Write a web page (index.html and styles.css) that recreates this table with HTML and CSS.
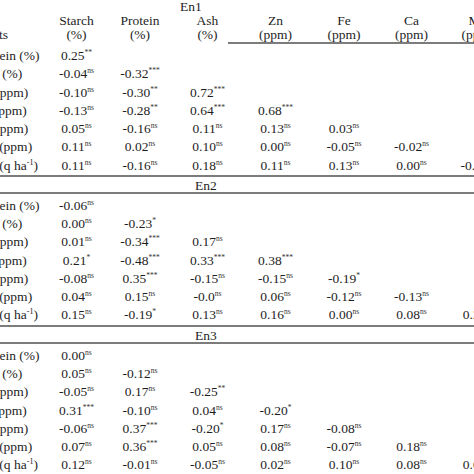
FILE: index.html
```html
<!DOCTYPE html>
<html>
<head>
<meta charset="utf-8">
<link rel="stylesheet" href="styles.css">
</head>
<body>
<div class="table">
  <div class="en en1">En1</div>
  <div class="row hrow">
    <div></div><div>Starch</div><div>Protein</div><div>Ash</div><div>Zn</div><div>Fe</div><div>Ca</div><div>Mg</div>
  </div>
  <div class="row hrow">
    <div class="lab">Traits</div><div>(%)</div><div>(%)</div><div>(%)</div><div>(ppm)</div><div>(ppm)</div><div>(ppm)</div><div>(ppm)</div>
  </div>
  <div class="rule partial"></div>

  <div class="body">
    <div class="row"><div class="lab">Protein (%)</div><div>0.25<sup>**</sup></div></div>
    <div class="row"><div class="lab">Ash (%)</div><div>-0.04<sup>ns</sup></div><div>-0.32<sup>***</sup></div></div>
    <div class="row"><div class="lab">Zn (ppm)</div><div>-0.10<sup>ns</sup></div><div>-0.30<sup>**</sup></div><div>0.72<sup>***</sup></div></div>
    <div class="row"><div class="lab">Fe (ppm)</div><div>-0.13<sup>ns</sup></div><div>-0.28<sup>**</sup></div><div>0.64<sup>***</sup></div><div>0.68<sup>***</sup></div></div>
    <div class="row"><div class="lab">Ca (ppm)</div><div>0.05<sup>ns</sup></div><div>-0.16<sup>ns</sup></div><div>0.11<sup>ns</sup></div><div>0.13<sup>ns</sup></div><div>0.03<sup>ns</sup></div></div>
    <div class="row"><div class="lab">Mg (ppm)</div><div>0.11<sup>ns</sup></div><div>0.02<sup>ns</sup></div><div>0.10<sup>ns</sup></div><div>0.00<sup>ns</sup></div><div>-0.05<sup>ns</sup></div><div>-0.02<sup>ns</sup></div></div>
    <div class="row"><div class="lab">GY (q ha<sup class="u">-1</sup>)</div><div>0.11<sup>ns</sup></div><div>-0.16<sup>ns</sup></div><div>0.18<sup>ns</sup></div><div>0.11<sup>ns</sup></div><div>0.13<sup>ns</sup></div><div>0.00<sup>ns</sup></div><div>-0.05<sup>ns</sup></div></div>
  </div>
  <div class="rule"></div>

  <div class="en">En2</div>
  <div class="rule"></div>
  <div class="body">
    <div class="row"><div class="lab">Protein (%)</div><div>-0.06<sup>ns</sup></div></div>
    <div class="row"><div class="lab">Ash (%)</div><div>0.00<sup>ns</sup></div><div>-0.23<sup>*</sup></div></div>
    <div class="row"><div class="lab">Zn (ppm)</div><div>0.01<sup>ns</sup></div><div>-0.34<sup>***</sup></div><div>0.17<sup>ns</sup></div></div>
    <div class="row"><div class="lab">Fe (ppm)</div><div>0.21<sup>*</sup></div><div>-0.48<sup>***</sup></div><div>0.33<sup>***</sup></div><div>0.38<sup>***</sup></div></div>
    <div class="row"><div class="lab">Ca (ppm)</div><div>-0.08<sup>ns</sup></div><div>0.35<sup>***</sup></div><div>-0.15<sup>ns</sup></div><div>-0.15<sup>ns</sup></div><div>-0.19<sup>*</sup></div></div>
    <div class="row"><div class="lab">Mg (ppm)</div><div>0.04<sup>ns</sup></div><div>0.15<sup>ns</sup></div><div>-0.0<sup>ns</sup></div><div>0.06<sup>ns</sup></div><div>-0.12<sup>ns</sup></div><div>-0.13<sup>ns</sup></div></div>
    <div class="row"><div class="lab">GY (q ha<sup class="u">-1</sup>)</div><div>0.15<sup>ns</sup></div><div>-0.19<sup>*</sup></div><div>0.13<sup>ns</sup></div><div>0.16<sup>ns</sup></div><div>0.00<sup>ns</sup></div><div>0.08<sup>ns</sup></div><div>0.20<sup>ns</sup></div></div>
  </div>
  <div class="rule"></div>

  <div class="en">En3</div>
  <div class="rule"></div>
  <div class="body">
    <div class="row"><div class="lab">Protein (%)</div><div>0.00<sup>ns</sup></div></div>
    <div class="row"><div class="lab">Ash (%)</div><div>0.05<sup>ns</sup></div><div>-0.12<sup>ns</sup></div></div>
    <div class="row"><div class="lab">Zn (ppm)</div><div>-0.05<sup>ns</sup></div><div>0.17<sup>ns</sup></div><div>-0.25<sup>**</sup></div></div>
    <div class="row"><div class="lab">Fe (ppm)</div><div>0.31<sup>***</sup></div><div>-0.10<sup>ns</sup></div><div>0.04<sup>ns</sup></div><div>-0.20<sup>*</sup></div></div>
    <div class="row"><div class="lab">Ca (ppm)</div><div>-0.06<sup>ns</sup></div><div>0.37<sup>***</sup></div><div>-0.20<sup>*</sup></div><div>0.17<sup>ns</sup></div><div>-0.08<sup>ns</sup></div></div>
    <div class="row"><div class="lab">Mg (ppm)</div><div>0.07<sup>ns</sup></div><div>0.36<sup>***</sup></div><div>0.05<sup>ns</sup></div><div>0.08<sup>ns</sup></div><div>-0.07<sup>ns</sup></div><div>0.18<sup>ns</sup></div></div>
    <div class="row"><div class="lab">GY (q ha<sup class="u">-1</sup>)</div><div>0.12<sup>ns</sup></div><div>-0.01<sup>ns</sup></div><div>-0.05<sup>ns</sup></div><div>0.02<sup>ns</sup></div><div>0.10<sup>ns</sup></div><div>0.08<sup>ns</sup></div><div>0.04<sup>ns</sup></div></div>
  </div>
</div>
</body>
</html>
```
FILE: styles.css
```css
html, body {
  margin: 0;
  padding: 0;
  background: #ffffff;
}
body {
  width: 474px;
  height: 474px;
  overflow: hidden;
}
.table {
  margin-left: -23px;
  width: 535px;
  font-family: "Liberation Serif", "Times New Roman", serif;
  font-size: 13.5px;
  color: #1e1e1e;
}
.row {
  display: grid;
  grid-template-columns: 69px 61px 66px 69px 67px 70px 65px 68px;
  height: 18.28px;
  line-height: 18.28px;
  white-space: nowrap;
}
.row > div {
  text-align: center;
}
.row > .lab {
  text-align: left;
}
.hrow {
  height: 14px;
  line-height: 14px;
}
.en {
  height: 14px;
  line-height: 14px;
  padding-left: 203px;
}
.body + .rule + .en,
.rule + .en {
  height: 12px;
  line-height: 12px;
  padding-top: 3px;
  padding-left: 218px;
}
.en1 {
  height: 14px;
  line-height: 14px;
  padding-top: 0;
  padding-left: 203px;
}
.rule {
  height: 0;
  border-top: 2px solid #7c7c7c;
}
.rule.partial {
  margin-left: 251px;
}
.body {
  padding-top: 3px;
}
sup {
  font-size: 7.5px;
  line-height: 0;
  vertical-align: 5px;
  color: #333;
}
sup.u {
  font-size: 8px;
  vertical-align: 5px;
  color: #1e1e1e;
}
```
